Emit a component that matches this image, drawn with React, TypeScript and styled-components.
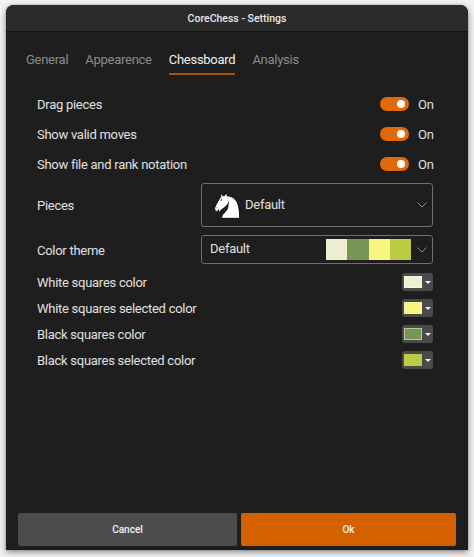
import React from "react";
import styled, { createGlobalStyle } from "styled-components";

const Global = createGlobalStyle`
  html, body { margin: 0; padding: 0; background: #f2f2f2; }
  body { width: 474px; height: 557px; overflow: hidden; font-family: Roboto, "Liberation Sans", sans-serif; }
`;
const Page = styled.div`
  width: 474px; height: 557px; padding: 5px 6px 7px; box-sizing: border-box;
`;
const Window = styled.div`
  height: 545px; background: #1e1e1e; border-radius: 8px 8px 0 0; display: flex; flex-direction: column;
  box-shadow: 0 2px 6px rgba(0,0,0,.45), 0 0 1px rgba(0,0,0,.6); overflow: hidden;
`;
const TitleBar = styled.div`
  height: 26px; flex: none; background: #2b2b2b; border-bottom: 1px solid #111; display: flex; align-items: center; justify-content: center;
  font-size: 10.5px; font-weight: 500; color: #e8e8e8;
`;
const Tabs = styled.div`
  display: flex; gap: 17px; padding: 0 20px; height: 43px; flex: none; align-items: stretch;
`;
const Tab = styled.div<{ $active?: boolean }>`
  font-size: 13px; letter-spacing: -.27px; color: ${p => (p.$active ? "#f0f0f0" : "#8c8c8c")}; display: flex; align-items: center; padding-top: 14px; box-sizing: border-box; height: 43px;
  border-bottom: 2px solid ${p => (p.$active ? "#a8520f" : "transparent")};
`;
const Content = styled.div`
  flex: 1; display: flex; flex-direction: column; padding: 14px 35px 0 31px;
`;
const Row = styled.div<{ $h: number; $mt?: number }>`
  height: ${p => p.$h}px; margin-top: ${p => p.$mt ?? 0}px; display: flex; align-items: center; justify-content: space-between; flex: none;
`;
const Label = styled.span`
  font-size: 13px; letter-spacing: -.27px; color: #e0e0e0; padding-top: 1px;
`;
const ToggleWrap = styled.div`
  display: flex; align-items: center; gap: 9px; font-size: 13px; letter-spacing: -.27px; color: #e0e0e0; width: 53px;
`;
const Track = styled.div`
  width: 29px; height: 14px; border-radius: 7px; background: #e06a0a; display: flex; align-items: center; justify-content: flex-end; padding-right: 4px; box-sizing: border-box; flex: none;
`;
const Knob = styled.div`
  width: 8px; height: 8px; border-radius: 50%; background: #fff;
`;
const Select = styled.div`
  width: 232px; height: 100%; box-sizing: border-box; border: 1px solid #6e6e6e; border-radius: 3px; display: flex; align-items: center; padding: 0 5px 0 8px; font-size: 13px; letter-spacing: -.27px; color: #e0e0e0;
`;
const SelectText = styled.span`
  flex: 1; padding-bottom: 2px;
`;
const Palette = styled.div`
  display: flex; height: 21px; margin-right: 6px;
`;
const Swatch = styled.div<{ $c: string }>`
  width: 21.25px; background: ${p => p.$c};
`;
const Chevron = styled.svg`
  width: 10px; height: 6px; flex: none; fill: none; stroke: #8d8d8d; stroke-width: 1;
`;
const ColorButton = styled.div`
  width: 31px; height: 18px; background: #4a4a4a; border-radius: 3px; display: flex; align-items: center; padding-left: 2px; box-sizing: border-box; gap: 3px;
`;
const ColorChip = styled.div<{ $c: string; $b: string }>`
  width: 18px; height: 12px; box-sizing: border-box; background: ${p => p.$c}; border: 1px solid ${p => p.$b};
`;
const Caret = styled.div`
  width: 0; height: 0; border-left: 3px solid transparent; border-right: 3px solid transparent; border-top: 3px solid #f0f0f0;
`;
const Footer = styled.div`
  display: flex; gap: 4px; padding: 0 12px 4px; flex: none;
`;
const Button = styled.div<{ $primary?: boolean }>`
  height: 33px; flex: ${p => (p.$primary ? "0 0 215px" : "0 0 219px")}; border-radius: 2px; background: ${p => (p.$primary ? "#d56000" : "#4c4c4c")};
  display: flex; align-items: center; justify-content: center; font-size: 10px; font-weight: 500; color: #f2f2f2;
`;

const Knight = () => (
  <svg width="35" height="35" viewBox="0 0 45 45" style={{ flex: "none" }}>
    <g fill="#fff" stroke="#000" strokeWidth="1.1" strokeLinejoin="round" strokeLinecap="round">
      <path d="M22 10C32.5 11 38.5 18 38 39L15 39C15 30 25 32.5 23 18" />
      <path d="M24 18C24.38 20.91 18.45 25.37 16 27C13 29 13.18 31.34 11 31C9.958 30.06 12.41 27.96 11 28C10 28 11.19 29.23 10 30C9 30 5.997 31 6 26C6 24 12 14 12 14C12 14 13.89 12.1 14 10.5C13.27 9.506 13.5 8.5 13.5 7.5C14.5 6.5 16.5 10 16.5 10L18.5 10C18.5 10 19.28 8.008 21 7C22 7 22 10 22 10" />
    </g>
    <circle cx="9" cy="25.5" r="0.6" fill="#000" />
    <ellipse cx="14.5" cy="15.5" rx="0.6" ry="1.5" fill="#000" transform="rotate(30 14.5 15.5)" />
  </svg>
);

const Down = () => (
  <Chevron viewBox="0 0 10 6"><path d="M.5.5 5 5 9.5.5" /></Chevron>
);

const Toggle = () => (
  <ToggleWrap><Track><Knob /></Track>On</ToggleWrap>
);

const toggles = ["Drag pieces", "Show valid moves", "Show file and rank notation"];
const palette = ["#eeeed2", "#769656", "#f6f680", "#bbcb44"];
const colors: [string, string, string][] = [
  ["White squares color", "#eeeed2", "#f6f6e4"],
  ["White squares selected color", "#f6f680", "#f9f9a0"],
  ["Black squares color", "#769656", "#b4c8a0"],
  ["Black squares selected color", "#bbcb44", "#bbcb44"],
];

export default function App() {
  return (
    <Page>
      <Global />
      <Window>
        <TitleBar>CoreChess - Settings</TitleBar>
        <Tabs>
          <Tab>General</Tab>
          <Tab>Appearence</Tab>
          <Tab $active>Chessboard</Tab>
          <Tab>Analysis</Tab>
        </Tabs>
        <Content>
          {toggles.map(t => (
            <Row $h={30} key={t}><Label>{t}</Label><Toggle /></Row>
          ))}
          <Row $h={44} $mt={4}>
            <Label>Pieces</Label>
            <Select><Knight /><SelectText>Default</SelectText><Down /></Select>
          </Row>
          <Row $h={29} $mt={8}>
            <Label>Color theme</Label>
            <Select>
              <SelectText>Default</SelectText>
              <Palette>{palette.map(c => <Swatch $c={c} key={c} />)}</Palette>
              <Down />
            </Select>
          </Row>
          {colors.map((c, i) => (
            <Row $h={26} $mt={i === 0 ? 5 : 0} key={c[0]}>
              <Label>{c[0]}</Label>
              <ColorButton><ColorChip $c={c[1]} $b={c[2]} /><Caret /></ColorButton>
            </Row>
          ))}
        </Content>
        <Footer>
          <Button>Cancel</Button>
          <Button $primary>Ok</Button>
        </Footer>
      </Window>
    </Page>
  );
}
